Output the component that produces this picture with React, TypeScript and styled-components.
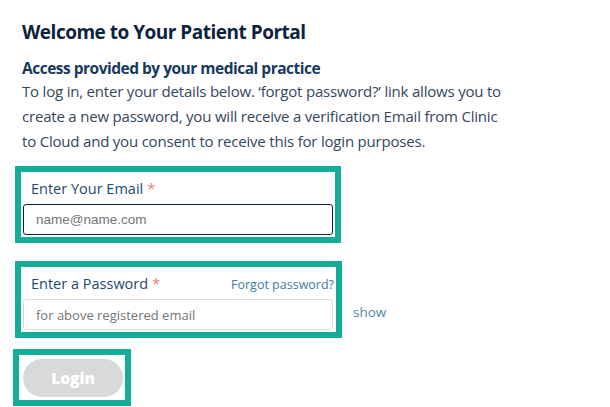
import styled, { createGlobalStyle } from 'styled-components';

const GlobalStyle = createGlobalStyle`
  html, body {
    margin: 0;
    padding: 0;
    background: #ffffff;
  }
  body {
    font-family: 'Open Sans', 'DejaVu Sans', sans-serif;
  }
`;

const teal = '#14ad97';

const Page = styled.main`
  width: 610px;
  height: 407px;
  overflow: hidden;
  padding: 18px 0 0 15px;
  box-sizing: border-box;
`;

const Intro = styled.section`
  padding-left: 7px;
`;

const Title = styled.h1`
  margin: 0;
  font-size: 19px;
  line-height: 28px;
  font-weight: 700;
  letter-spacing: -0.5px;
  color: #0c2340;
`;

const Subtitle = styled.h2`
  margin: 12px 0 0;
  font-size: 15.5px;
  line-height: 20px;
  font-weight: 700;
  letter-spacing: -0.5px;
  color: #163a5f;
`;

const Body = styled.p`
  margin: 1px 0 0;
  font-size: 15px;
  line-height: 25px;
  letter-spacing: -0.2px;
  color: #34475e;
  white-space: nowrap;
`;

const Form = styled.form`
  margin-top: 12px;
  display: flex;
  flex-direction: column;
  align-items: flex-start;
`;

const Highlight = styled.div<{ width: number }>`
  box-sizing: border-box;
  width: ${({ width }) => width}px;
  border: 6px solid ${teal};
  padding: 0 2px 2px;
`;

const Row = styled.div`
  display: flex;
  align-items: flex-end;
  gap: 11px;
  margin-top: 18px;
`;

const LabelRow = styled.div`
  display: flex;
  justify-content: space-between;
  align-items: baseline;
  padding: 7px 0 0 8px;
  height: 32px;
  box-sizing: border-box;
`;

const Label = styled.label`
  font-size: 14.5px;
  color: #1c4a72;
`;

const Required = styled.span`
  color: #f08080;
  margin-left: 4px;
`;

const ForgotLink = styled.a`
  font-size: 12.5px;
  color: #3b7ea6;
  text-decoration: none;
`;

const Input = styled.input<{ $focused?: boolean }>`
  display: block;
  width: 310px;
  height: 31px;
  box-sizing: border-box;
  border: 1px solid ${({ $focused }) => ($focused ? '#0f2236' : '#dcdcdc')};
  border-radius: 3px;
  padding: 0 12px;
  font-size: ${({ $focused }) => ($focused ? '13.5px' : '13px')};
  font-family: ${({ $focused }) => ($focused ? "'Liberation Sans', Arial, sans-serif" : "'Open Sans', sans-serif")};
  color: #333;
  outline: none;

  ::placeholder {
    color: #a9a9a9;
  }
`;

const ShowToggle = styled.span`
  font-size: 13.5px;
  color: #4f88b0;
  padding-bottom: 17px;
`;

const LoginBox = styled.div`
  margin-top: 11px;
  margin-left: -2px;
  border: 6px solid ${teal};
  padding: 4px 2px 3px 4px;
`;

const LoginButton = styled.button`
  display: block;
  width: 100px;
  height: 38px;
  border: none;
  border-radius: 19px;
  background: #d9d9d9;
  color: #ffffff;
  font-family: 'Open Sans', sans-serif;
  font-size: 15.5px;
  font-weight: 800;
`;

export default function App() {
  return (
    <>
      <GlobalStyle />
      <Page>
        <Intro>
          <Title>Welcome to Your Patient Portal</Title>
          <Subtitle>Access provided by your medical practice</Subtitle>
          <Body>
            To log in, enter your details below. ‘forgot password?’ link allows you to
            <br />
            create a new password, you will receive a verification Email from Clinic
            <br />
            to Cloud and you consent to receive this for login purposes.
          </Body>
        </Intro>
        <Form onSubmit={(e) => e.preventDefault()}>
          <Highlight width={326}>
            <LabelRow>
              <Label htmlFor="email">
                Enter Your Email<Required>*</Required>
              </Label>
            </LabelRow>
            <Input id="email" $focused placeholder="name@name.com" />
          </Highlight>
          <Row>
            <Highlight width={327}>
              <LabelRow>
                <Label htmlFor="password">
                  Enter a Password<Required>*</Required>
                </Label>
                <ForgotLink href="#">Forgot password?</ForgotLink>
              </LabelRow>
              <Input id="password" type="password" placeholder="for above registered email" />
            </Highlight>
            <ShowToggle>show</ShowToggle>
          </Row>
          <LoginBox>
            <LoginButton type="submit" disabled>
              Login
            </LoginButton>
          </LoginBox>
        </Form>
      </Page>
    </>
  );
}
